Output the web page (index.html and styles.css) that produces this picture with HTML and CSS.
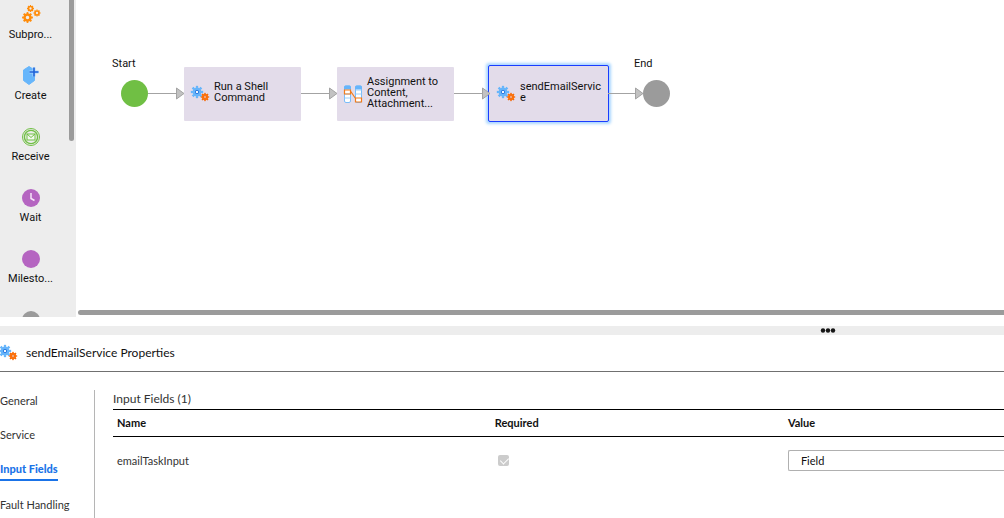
FILE: index.html
```html
<!DOCTYPE html>
<html lang="en">
<head>
<meta charset="utf-8">
<title>Process designer</title>
<link rel="stylesheet" href="styles.css">
</head>
<body>
<svg class="defs" aria-hidden="true">
  <symbol id="gears" viewBox="0 0 20 18">
    <circle cx="7" cy="7" r="4.500" fill="#66b5fb"/>
    <circle cx="7" cy="7" r="5" fill="none" stroke="#66b5fb" stroke-width="2.400" pathLength="16" stroke-dasharray="1.100 .9" stroke-dashoffset="0.550"/>
    <rect x="5.500" y="5.500" width="3" height="3" rx=".5" fill="#f4f6fd" stroke="#2f7de0" stroke-width="1"/>
    <circle cx="15" cy="12" r="3.200" fill="#ff7409"/>
    <circle cx="15" cy="12" r="3.400" fill="none" stroke="#f4690a" stroke-width="1.600" pathLength="16" stroke-dasharray="1.100 .9" stroke-dashoffset="0.550"/>
    <circle cx="15" cy="12" r="1.200" fill="#fde9dc" stroke="#e04e00" stroke-width=".6"/>
  </symbol>
</svg>
<div class="app">
  <section class="workspace">
    <aside class="palette">
      <div class="palette-items">
        <button class="tool" type="button">
          <svg class="tool-icon" viewBox="0 0 24 24" fill="none" stroke="#ff8c0a">
            <circle cx="8.500" cy="14.500" r="3" stroke-width="2.500"/>
            <circle cx="8.500" cy="14.500" r="4.500" stroke-width="1.800" pathLength="16" stroke-dasharray="1 1" stroke-dashoffset=".5"/>
            <circle cx="11.500" cy="5.500" r="2" stroke-width="1.700"/>
            <circle cx="11.500" cy="5.500" r="2.900" stroke-width="1.200" pathLength="16" stroke-dasharray="1 1" stroke-dashoffset=".5"/>
            <circle cx="18" cy="10" r="2" stroke-width="1.700"/>
            <circle cx="18" cy="10" r="2.900" stroke-width="1.200" pathLength="16" stroke-dasharray="1 1" stroke-dashoffset=".5"/>
          </svg>
          <span class="tool-name">Subpro...</span>
        </button>
        <button class="tool" type="button">
          <svg class="tool-icon" viewBox="0 0 24 24">
            <path d="M10 2.500 15.500 6v10.500l-5.500 4-5.500-4V6z" fill="#67b6fb" stroke="#67b6fb" stroke-width="1" stroke-linejoin="round"/>
            <path d="M15 3.500v9M10.500 8h9" stroke="#a9d6ff" stroke-width="3"/>
            <path d="M15 3.500v9M10.500 8h9" stroke="#1f62d8" stroke-width="1.600"/>
          </svg>
          <span class="tool-name">Create</span>
        </button>
        <button class="tool" type="button">
          <svg class="tool-icon" viewBox="0 0 24 24" fill="none" stroke="#70bf44">
            <circle cx="12" cy="12" r="8.500" stroke-width="1"/>
            <circle cx="12" cy="12" r="6.600" stroke-width="1.400"/>
            <rect x="8" y="9" width="8" height="6" fill="#f3faef"/>
            <path d="m8 9 4 3.500L16 9"/>
          </svg>
          <span class="tool-name">Receive</span>
        </button>
        <button class="tool" type="button">
          <svg class="tool-icon" viewBox="0 0 24 24">
            <circle cx="12" cy="12" r="9" fill="#b565c1"/>
            <path d="M12 7v5.500l3.500 2" fill="none" stroke="#f6e6f8" stroke-width="1.500"/>
          </svg>
          <span class="tool-name">Wait</span>
        </button>
        <button class="tool" type="button">
          <svg class="tool-icon" viewBox="0 0 24 24"><circle cx="12" cy="12" r="9" fill="#b565c1"/></svg>
          <span class="tool-name">Milesto...</span>
        </button>
        <button class="tool" type="button" aria-label="End">
          <svg class="tool-icon" viewBox="0 0 24 24"><circle cx="12" cy="12" r="9" fill="#9b9b9b"/></svg>
        </button>
      </div>
      <div class="palette-scroll"><div class="palette-thumb"></div></div>
    </aside>
    <main class="canvas">
      <span class="event-name start-name">Start</span>
      <span class="event start"></span>
      <div class="node shell">
        <svg class="node-icon"><use href="#gears"/></svg>
        <span class="node-name">Run a Shell Command</span>
      </div>
      <div class="node assignment">
        <svg class="node-icon" viewBox="0 0 20 18" fill="none">
          <rect x="1.500" y="1" width="6" height="16.500" rx="1.500" fill="#fff" stroke="#79bdf8"/>
          <rect x="12.500" y="1" width="6" height="16.500" rx="1.500" fill="#fff" stroke="#79bdf8"/>
          <path d="M1 4.500V2q0-1.500 1.500-1.500h4Q8 .5 8 2v2.500zM12 4.500V2q0-1.500 1.500-1.500h4Q19 .5 19 2v2.500z" fill="#66b5fb"/>
          <path d="M1.500 9h6M1.500 13h6M12.500 9h6M12.500 5h6" stroke="#9ccffa"/>
          <path d="M1.500 5h6v4h-6zM12.500 13h6v4h-6zM7.500 6l5 7.500" stroke="#f47b18" stroke-width="1.200"/>
        </svg>
        <span class="node-name">Assignment to Content, Attachment...</span>
      </div>
      <div class="node service selected">
        <svg class="node-icon"><use href="#gears"/></svg>
        <span class="node-name">sendEmailService</span>
      </div>
      <span class="event-name end-name">End</span>
      <span class="event end"></span>
      <svg class="links" viewBox="0 0 600 14" aria-hidden="true">
        <path d="M72 7.500h29M225 7.500h29M378 7.500h29M532 7.500h28" stroke="#a3a3a3"/>
        <path d="M100.500 2v11l7.500-5.500zM253.500 2v11l7.500-5.500zM406.500 2v11l7.500-5.500zM559.500 2v11l7.500-5.500z" fill="#c2c2c2" stroke="#a3a3a3"/>
      </svg>
      <div class="canvas-scroll"></div>
    </main>
  </section>
  <section class="properties">
    <div class="splitter">
      <svg class="dots" viewBox="0 0 16 5"><g fill="#161616"><circle cx="3" cy="2.500" r="2.200"/><circle cx="8" cy="2.500" r="2.200"/><circle cx="13" cy="2.500" r="2.200"/></g></svg>
    </div>
    <header class="properties-head">
      <svg class="head-icon"><use href="#gears"/></svg>
      <h1 class="properties-title">sendEmailService Properties</h1>
    </header>
    <div class="properties-body">
      <nav class="tabs">
        <a class="tab" href="#general">General</a>
        <a class="tab" href="#service">Service</a>
        <a class="tab active" href="#input">Input Fields</a>
        <a class="tab" href="#fault">Fault Handling</a>
      </nav>
      <div class="fields" id="input">
        <h2 class="fields-title">Input Fields (1)</h2>
        <table class="fields-table">
          <colgroup><col class="col-name"><col class="col-required"><col></colgroup>
          <thead><tr><th>Name</th><th>Required</th><th>Value</th></tr></thead>
          <tbody>
            <tr>
              <td>emailTaskInput</td>
              <td><input class="check" type="checkbox" checked disabled aria-label="emailTaskInput required"></td>
              <td class="value-cell"><select class="value" aria-label="emailTaskInput value"><option>Field</option></select></td>
            </tr>
          </tbody>
        </table>
      </div>
    </div>
  </section>
</div>
</body>
</html>
```
FILE: styles.css
```css
* { box-sizing: border-box; }
body { margin: 0; background: #fff; color: #111; font: 11px/14px Roboto, sans-serif; }
.defs { position: absolute; width: 0; height: 0; }
.app { display: grid; grid-template-rows: minmax(0, 1fr) auto; height: 100vh; overflow: hidden; }

.workspace { display: flex; min-height: 0; }
.palette { display: flex; flex: none; width: 76px; overflow: hidden; background: #ededed; }
.palette-items { display: flex; flex-direction: column; gap: 21px; width: 61px; padding-top: 3px; }
.tool { display: flex; flex: none; flex-direction: column; align-items: center; width: 100%; padding: 0; border: 0; background: none; color: inherit; font: inherit; line-height: 16px; }
.tool-icon { width: 24px; height: 24px; }
.palette-scroll { padding-left: 8px; }
.palette-thumb { width: 5px; height: 141px; border-radius: 0 0 3px 3px; background: #9b9b9b; }

.canvas { position: relative; flex: 1; overflow: hidden; }
.event-name { position: absolute; top: 57px; }
.start-name { left: 36px; }
.end-name { left: 558px; }
.event { position: absolute; top: 80px; width: 27px; height: 27px; border-radius: 50%; }
.start { left: 45px; background: #70bf44; }
.end { left: 567px; background: #9b9b9b; }
.node { position: absolute; top: 67px; display: flex; align-items: center; gap: 4px; width: 117px; height: 54px; padding: 0 6px; border-radius: 1px; background: #e3dcea; }
.shell { left: 108px; }
.assignment { left: 261px; }
.service { top: 66px; left: 413px; width: 119px; height: 55px; padding: 0 7px; }
.selected { border-radius: 1px; outline: 1px solid #1a3dff; box-shadow: 0 0 3px 3px #a9d6ff; }
.node-icon, .head-icon { flex: none; width: 20px; height: 18px; }
.node-name { flex: 1; min-width: 0; padding-bottom: 4px; line-height: 11px; overflow-wrap: anywhere; }
.links { position: absolute; top: 86px; left: 0; width: 600px; height: 14px; }
.canvas-scroll { position: absolute; right: 0; bottom: 2px; left: 2px; height: 5px; border-radius: 3px 0 0 3px; background: #9b9b9b; }

.properties { padding-top: 9px; font-family: Lato, sans-serif; }
.splitter { display: flex; justify-content: flex-end; align-items: center; height: 9px; padding-right: 168px; background: #ededed; }
.dots { width: 16px; height: 5px; }
.properties-head { display: flex; align-items: center; gap: 8px; height: 37px; border-bottom: 1px solid #707070; }
.head-icon { margin-left: -2px; }
.properties-title, .fields-title { margin: 0; font-size: 12px; font-weight: 400; line-height: 18px; }
.properties-body { display: flex; min-height: 146px; padding-top: 18px; }
.tabs { display: flex; flex: none; flex-direction: column; align-items: flex-start; gap: 16px; width: 95px; padding-top: 3px; border-right: 1px solid #b5b5b5; }
.tab { border-bottom: 2px solid transparent; color: #333; line-height: 16px; text-decoration: none; white-space: nowrap; }
.active { padding-bottom: 2px; border-color: #1a73e8; color: #1a73e8; font-weight: 900; }
.fields { flex: 1; min-width: 0; padding-left: 18px; }
.fields-title { margin-bottom: 1px; color: #333; }
.fields-table { width: 100%; border-collapse: collapse; table-layout: fixed; }
.col-name { width: 42.4%; }
.col-required { width: 32.9%; }
th { height: 27px; padding: 0 4px; border-top: 1px solid #000; border-bottom: 1px solid #000; text-align: left; font-weight: 700; }
td { height: 48px; padding: 0 4px; color: #333; }
.value-cell { padding-right: 0; }
.check { display: block; width: 11px; height: 11px; margin: 0 0 0 3px; border-radius: 2px; appearance: none; background: #ccc; position: relative; }
.check::after { content: ""; position: absolute; top: 1px; left: 4px; width: 4px; height: 7px; border: solid #fff; border-width: 0 1px 1px 0; transform: rotate(45deg); }
.value { display: block; width: 100%; height: 21px; padding: 0 12px; border: 1px solid #b0b0b0; border-right: 0; border-radius: 2px 0 0 2px; appearance: none; background: #fff; color: #111; font: inherit; }
```
